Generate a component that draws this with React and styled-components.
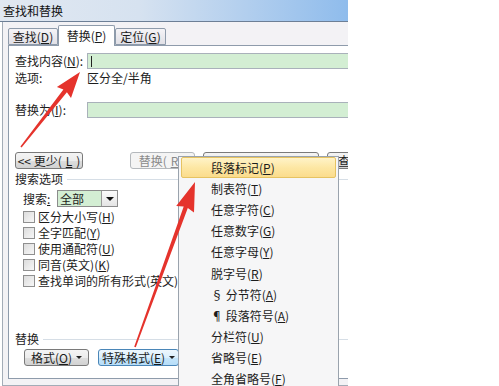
import React from "react";
import styled, { createGlobalStyle } from "styled-components";

const Global = createGlobalStyle`
  html, body { margin: 0; padding: 0; background: #fff; }
  body {
    font-family: "Noto Sans CJK SC", "Noto Sans", sans-serif;
    font-size: 12px;
    color: #1c1c1c;
  }
  #root { width: 499px; height: 386px; }
`;

const Page = styled.div`
  position: relative;
  width: 499px;
  height: 386px;
  overflow: hidden;
  background: #fff;
`;

const Dialog = styled.div`
  position: relative;
  width: 348px;
  height: 386px;
  overflow: hidden;
  display: flex;
  flex-direction: column;
`;

const TitleBar = styled.div`
  flex: none;
  height: 21px;
  border-bottom: 1px solid #6d7f96;
  background: linear-gradient(90deg, #e1e8f1 0%, #d6e2f0 40%, #b3cfee 70%, #8fbcec 100%);
  display: flex;
  align-items: center;
  padding-left: 3px;
  font-size: 12px;
  line-height: 16px;
  color: #111;
`;

const Frame = styled.div`
  flex: 1;
  width: 400px;
  margin-left: 2px;
  box-sizing: border-box;
  border-left: 1px solid #a3acb7;
  border-bottom: 1px solid #a3acb7;
  background: #f3f2f5;
  padding: 0 0 6px 5px;
  display: flex;
  flex-direction: column;
`;

const TabStrip = styled.div`
  flex: none;
  height: 23px;
  display: flex;
  align-items: flex-end;
  position: relative;
  z-index: 1;
`;

const Tab = styled.div`
  box-sizing: border-box;
  width: ${(p) => p.$w}px;
  height: ${(p) => (p.$active ? 21 : 17)}px;
  margin-bottom: ${(p) => (p.$active ? -1 : 0)}px;
  border: 1px solid #8e9bab;
  border-bottom: ${(p) => (p.$active ? "none" : "1px solid #8e9bab")};
  border-radius: 2px 2px 0 0;
  background: ${(p) => (p.$active ? "#fff" : "linear-gradient(#f5f4f7, #e1e0e6)")};
  display: flex;
  align-items: center;
  justify-content: center;
  padding-bottom: ${(p) => (p.$active ? 2 : 0)}px;
  font-size: 12px;
  line-height: 15px;
  white-space: nowrap;
`;

const Panel = styled.div`
  flex: none;
  box-sizing: border-box;
  height: 334px;
  border: 1px solid #8e9bab;
  background: #fff;
  padding: 0 0 0 6px;
  display: flex;
  flex-direction: column;
`;

const Row = styled.div`
  flex: none;
  display: flex;
  align-items: center;
  height: ${(p) => p.$h || 16}px;
  margin-top: ${(p) => p.$mt || 0}px;
  padding-left: ${(p) => p.$pl || 0}px;
  line-height: 16px;
  white-space: nowrap;
`;

const Label = styled.span`
  flex: none;
  width: ${(p) => p.$w}px;
`;

const Input = styled.div`
  flex: 1;
  box-sizing: border-box;
  height: 16px;
  border: 1px solid #a9b1ba;
  border-right: none;
  background: #d3eed3;
  padding-left: 3px;
  display: flex;
  align-items: center;
`;

const Caret = styled.span`
  width: 1px;
  height: 11px;
  background: #222;
`;

const U = styled.span`
  text-decoration: underline;
`;

const Button = styled.div`
  flex: none;
  box-sizing: border-box;
  width: ${(p) => p.$w}px;
  margin-left: ${(p) => p.$ml || 0}px;
  height: 17px;
  border: 1px solid ${(p) => (p.$disabled ? "#b4b8bc" : p.$hot ? "#4a86b8" : "#7a7a7a")};
  border-radius: 3px;
  background: ${(p) =>
    p.$disabled
      ? "#f4f4f4"
      : p.$hot
      ? "linear-gradient(#eef7fd, #dbeffc 50%, #c6e6fb 51%, #b6ddf8)"
      : "linear-gradient(#f4f4f4, #ececec 50%, #dedede 51%, #d2d2d2)"};
  color: ${(p) => (p.$disabled ? "#8a8a8a" : "#1c1c1c")};
  display: flex;
  align-items: center;
  justify-content: ${(p) => (p.$start ? "flex-start" : "center")};
  padding-left: ${(p) => (p.$start ? 10 : 0)}px;
  gap: 4px;
  font-size: 12px;
  line-height: 15px;
  white-space: nowrap;
`;

const Caret3 = styled.span`
  width: 0;
  height: 0;
  border-left: 3px solid transparent;
  border-right: 3px solid transparent;
  border-top: 3px solid #222;
`;

const GroupHeading = styled.div`
  flex: none;
  display: flex;
  align-items: center;
  height: 16px;
  margin-top: ${(p) => p.$mt}px;
  line-height: 16px;
  &::after {
    content: "";
    flex: 1;
    margin-left: 4px;
    border-top: 1px solid #d6dee6;
  }
`;

const Select = styled.div`
  flex: none;
  box-sizing: border-box;
  width: 61px;
  height: 17px;
  border: 1px solid #8c8c8c;
  background: #d3eed3;
  display: flex;
  align-items: center;
  padding-left: 2px;
`;

const SelectText = styled.span`
  flex: 1;
`;

const SelectButton = styled.span`
  flex: none;
  box-sizing: border-box;
  width: 16px;
  height: 15px;
  border-left: 1px solid #9a9a9a;
  background: linear-gradient(#fbfbfb, #e4e4e4);
  display: flex;
  align-items: center;
  justify-content: center;
  &::before {
    content: "";
    border-left: 4px solid transparent;
    border-right: 4px solid transparent;
    border-top: 4px solid #111;
  }
`;

const Check = styled.span`
  flex: none;
  box-sizing: border-box;
  width: 12px;
  height: 12px;
  margin-right: 3px;
  border: 1px solid #8f8f8f;
  background: linear-gradient(135deg, #dcdcdc, #f7f7f7);
`;

const Menu = styled.div`
  position: absolute;
  left: 178px;
  top: 156px;
  width: 161px;
  height: 250px;
  box-sizing: border-box;
  border: 1px solid #9aa3ad;
  background: #f6f6f7;
  padding: 0 2px;
  z-index: 5;
`;

const MenuItem = styled.div`
  box-sizing: border-box;
  height: 21.2px;
  display: flex;
  align-items: center;
  padding-left: 29px;
  border: 1px solid ${(p) => (p.$hl ? "#e6c362" : "transparent")};
  border-radius: 2px;
  background: ${(p) => (p.$hl ? "linear-gradient(#fff3c8, #fde7a4 50%, #fbdc8c)" : "transparent")};
  font-size: 12px;
  line-height: 16px;
  color: #1c1c1c;
  white-space: nowrap;
`;

const ArrowLayer = styled.svg`
  position: absolute;
  left: 0;
  top: 0;
  width: 499px;
  height: 386px;
  pointer-events: none;
  z-index: 10;
`;

function arrowPoints(tail, tip, headLen, headHalf, wTail, wHead) {
  const dx = tip[0] - tail[0];
  const dy = tip[1] - tail[1];
  const len = Math.hypot(dx, dy);
  const ux = dx / len;
  const uy = dy / len;
  const nx = -uy;
  const ny = ux;
  const bx = tip[0] - ux * headLen;
  const by = tip[1] - uy * headLen;
  const pts = [
    [tail[0] + nx * wTail, tail[1] + ny * wTail],
    [bx + nx * wHead, by + ny * wHead],
    [bx + nx * headHalf - ux * 2, by + ny * headHalf - uy * 2],
    tip,
    [bx - nx * headHalf - ux * 2, by - ny * headHalf - uy * 2],
    [bx - nx * wHead, by - ny * wHead],
    [tail[0] - nx * wTail, tail[1] - ny * wTail],
  ];
  return pts.map((p) => `${p[0].toFixed(1)},${p[1].toFixed(1)}`).join(" ");
}

const menuItems = [
  ["段落标记", "P"],
  ["制表符", "T"],
  ["任意字符", "C"],
  ["任意数字", "G"],
  ["任意字母", "Y"],
  ["脱字号", "R"],
  ["§ 分节符", "A"],
  ["¶ 段落符号", "A"],
  ["分栏符", "U"],
  ["省略号", "E"],
  ["全角省略号", "F"],
];

const checks = [
  ["区分大小写", "H"],
  ["全字匹配", "Y"],
  ["使用通配符", "U"],
  ["同音(英文)", "K"],
  ["查找单词的所有形式(英文)", "W"],
];

export default function App() {
  return (
    <Page>
      <Global />
      <Dialog>
        <TitleBar>查找和替换</TitleBar>
        <Frame>
          <TabStrip>
            <Tab $w={50}>查找(<U>D</U>)</Tab>
            <Tab $w={57} $active>替换(<U>P</U>)</Tab>
            <Tab $w={51}>定位(<U>G</U>)</Tab>
          </TabStrip>
          <Panel>
            <Row $mt={7}>
              <Label $w={72}>查找内容(<U>N</U>):</Label>
              <Input>
                <Caret />
              </Input>
            </Row>
            <Row $mt={1}>
              <Label $w={72}>选项:</Label>
              <span>区分全/半角</span>
            </Row>
            <Row $mt={16}>
              <Label $w={72}>替换为(<U>I</U>):</Label>
              <Input />
            </Row>
            <Row $mt={34} $h={17}>
              <Button $w={68}>&lt;&lt; 更少(<U>L</U>)</Button>
              <Button $w={65} $ml={47} $disabled>替换(<U>R</U>)</Button>
              <Button $w={116} $ml={8} />
              <Button $w={80} $ml={8} $start>查找</Button>
            </Row>
            <GroupHeading $mt={2}>搜索选项</GroupHeading>
            <Row $mt={3} $h={17} $pl={8}>
              <Label $w={34}>
                搜索<U>:</U>
              </Label>
              <Select>
                <SelectText>全部</SelectText>
                <SelectButton />
              </Select>
            </Row>
            {checks.map(([t, k], i) => (
              <Row key={i} $mt={i === 0 ? 2 : 0} $pl={8}>
                <Check />
                <span>
                  {t}(<U>{k}</U>)
                </span>
              </Row>
            ))}
            <GroupHeading $mt={42}>替换</GroupHeading>
            <Row $mt={2} $h={17} $pl={9}>
              <Button $w={65}>
                <span>
                  格式(<U>O</U>)
                </span>
                <Caret3 />
              </Button>
              <Button $w={81} $ml={9} $hot>
                <span>
                  特殊格式(<U>E</U>)
                </span>
                <Caret3 />
              </Button>
            </Row>
          </Panel>
        </Frame>
        <Menu>
          {menuItems.map(([t, k], i) => (
            <MenuItem key={i} $hl={i === 0}>
              {t}(<U>{k}</U>)
            </MenuItem>
          ))}
        </Menu>
      </Dialog>
      <ArrowLayer viewBox="0 0 499 386">
        <polygon fill="#e5332c" points={arrowPoints([21, 147], [80, 72], 24, 9, 0.8, 2.2)} />
        <polygon fill="#e5332c" points={arrowPoints([135, 347], [195, 182], 27, 9.5, 0.8, 2.2)} />
      </ArrowLayer>
    </Page>
  );
}
